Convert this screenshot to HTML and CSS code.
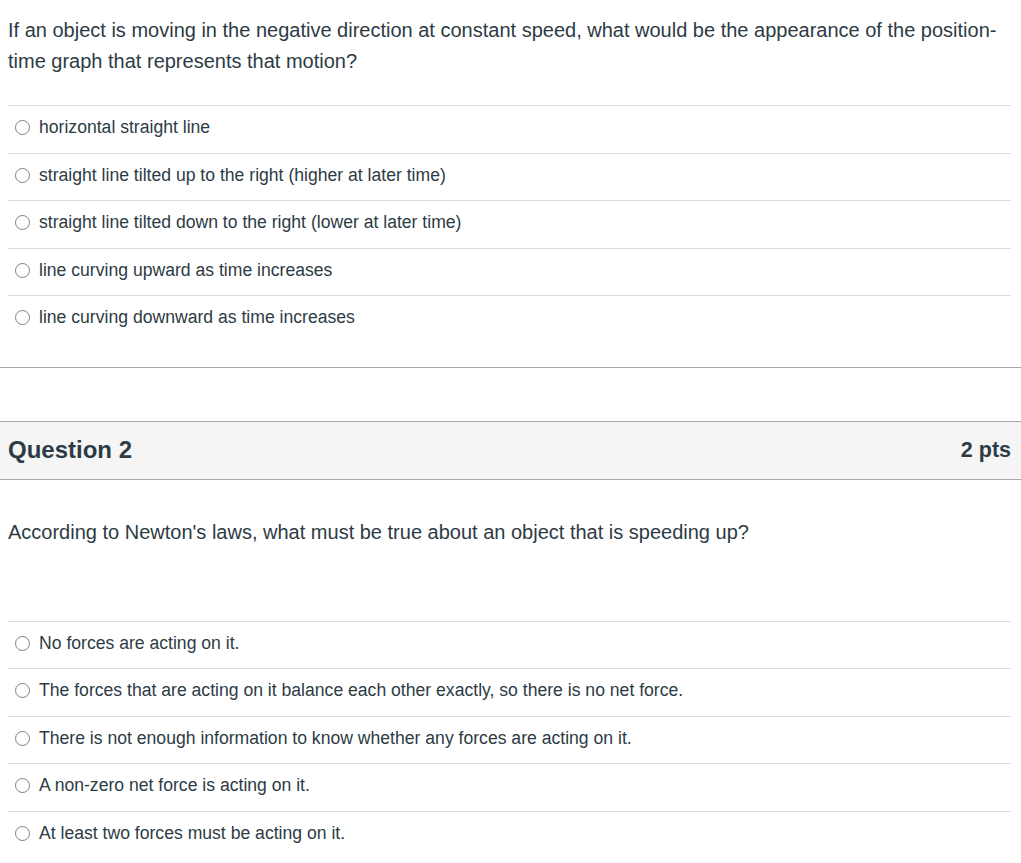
FILE: index.html
```html
<!DOCTYPE html>
<html>
<head>
<meta charset="utf-8">
<link rel="stylesheet" href="styles.css">
</head>
<body>
<div class="question q1">
  <div class="inner">
    <p class="qtext">If an object is moving in the negative direction at constant speed, what would be the appearance of the position-time graph that represents that motion?</p>
    <div class="answers">
      <div class="answer"><span class="radio"></span><span class="label">horizontal straight line</span></div>
      <div class="answer"><span class="radio"></span><span class="label">straight line tilted up to the right (higher at later time)</span></div>
      <div class="answer"><span class="radio"></span><span class="label">straight line tilted down to the right (lower at later time)</span></div>
      <div class="answer"><span class="radio"></span><span class="label">line curving upward as time increases</span></div>
      <div class="answer"><span class="radio"></span><span class="label">line curving downward as time increases</span></div>
    </div>
  </div>
</div>
<div class="question q2">
  <div class="header">
    <h2 class="qname">Question 2</h2>
    <span class="pts">2 pts</span>
  </div>
  <div class="inner">
    <p class="qtext q2text">According to Newton's laws, what must be true about an object that is speeding up?</p>
    <div class="answers">
      <div class="answer"><span class="radio"></span><span class="label">No forces are acting on it.</span></div>
      <div class="answer"><span class="radio"></span><span class="label">The forces that are acting on it balance each other exactly, so there is no net force.</span></div>
      <div class="answer"><span class="radio"></span><span class="label">There is not enough information to know whether any forces are acting on it.</span></div>
      <div class="answer"><span class="radio"></span><span class="label">A non-zero net force is acting on it.</span></div>
      <div class="answer"><span class="radio"></span><span class="label">At least two forces must be acting on it.</span></div>
    </div>
  </div>
</div>
</body>
</html>
```

FILE: styles.css
```css
html, body {
  margin: 0;
  padding: 0;
  background: #ffffff;
}
body {
  font-family: "Liberation Sans", Arial, sans-serif;
  color: #2d3b45;
  overflow: hidden;
}
.inner {
  padding: 0 10px 0 8px;
}
.qtext {
  margin: 0;
  font-size: 20px;
  line-height: 30.7px;
}
.q1 .qtext {
  padding-top: 15px;
  padding-bottom: 29px;
}
.q1 {
  border-bottom: 1px solid #a8a8a8;
  padding-bottom: 24px;
}
.answer {
  display: flex;
  align-items: center;
  gap: 9px;
  border-top: 1px solid #dddddd;
  padding: 8px 0 11.5px 7px;
  font-size: 17.6px;
  line-height: 27px;
}
.radio {
  width: 13px;
  height: 13px;
  border: 1px solid #808080;
  border-radius: 50%;
  flex: none;
  background: #fff;
}
.q2 {
  margin-top: 53px;
}
.header {
  display: flex;
  justify-content: space-between;
  align-items: center;
  background: #f5f5f5;
  border-top: 1px solid #a8a8a8;
  border-bottom: 1px solid #a8a8a8;
  height: 57px;
  padding: 0 10px 0 8px;
}
.qname {
  margin: 0;
  font-size: 24px;
  font-weight: bold;
}
.pts {
  font-size: 21.5px;
  font-weight: bold;
}
.q2text {
  padding-top: 37px;
  padding-bottom: 73px;
}
```
